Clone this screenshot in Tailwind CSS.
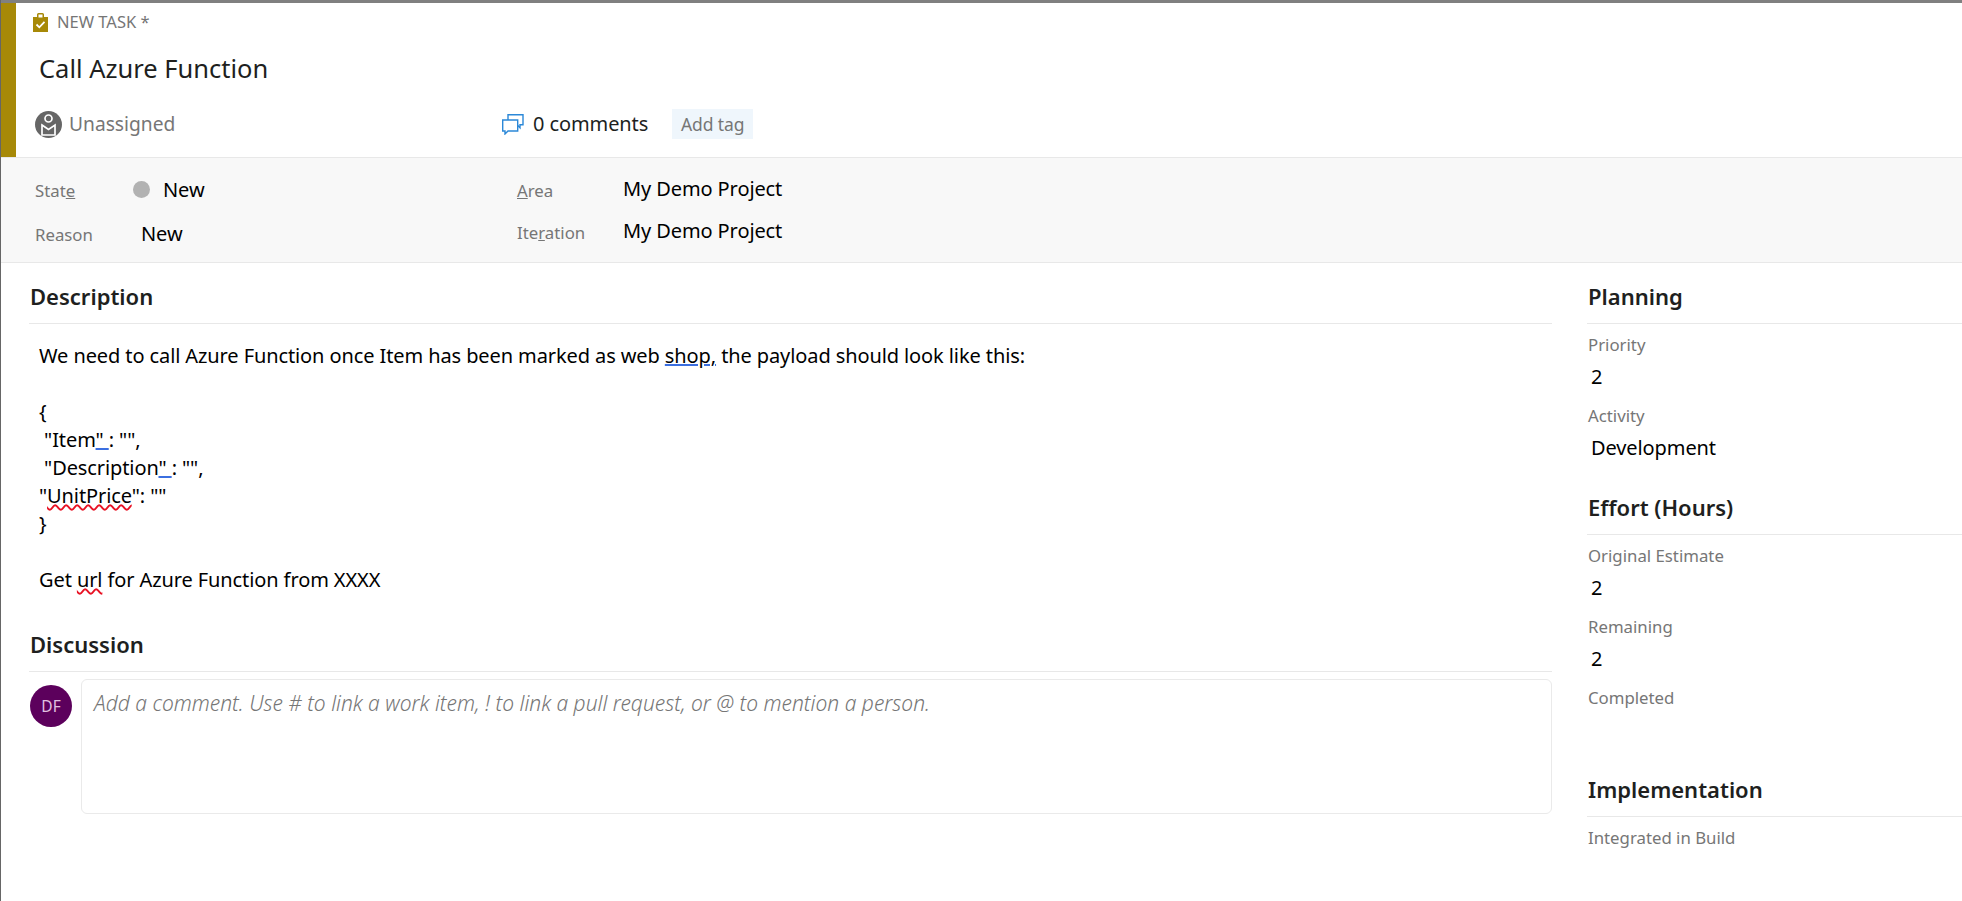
<!DOCTYPE html>
<html lang="en">
<head>
<meta charset="utf-8">
<title>New Task</title>
<script src="https://cdn.jsdelivr.net/npm/@tailwindcss/browser@4"></script>
</head>
<body class="bg-white font-['Noto_Sans',sans-serif] text-[20px] leading-[28px] text-black tracking-[-0.1px] overflow-hidden">
<div class="w-[1962px] h-[901px] border-l border-l-[#666] overflow-hidden">
  <div class="h-[3px] bg-[#808080]"></div>
  <header class="flex h-[155px] border-b border-b-[#e8e8e8]">
    <div class="w-[15px] bg-[#a78908] shrink-0"></div>
    <div class="flex flex-col pl-[17px]">
      <div class="flex items-center h-[38px] gap-[9px] text-[16.5px] text-[#767676] tracking-normal">
        <svg class="w-[15px] h-[19px] mt-[1px]" viewBox="0 0 15 19"><path fill="#a78908" d="M0 4h4V1.500A1.500 1.500 0 0 1 5.500 0h4A1.500 1.500 0 0 1 11 1.500V4h4v15H0z"/><path fill="none" stroke="#fff" stroke-width="1.800" d="M3.500 11.500l2.800 2.800 5.200-5.500"/><rect x="5.500" y="1.500" width="4" height="3" fill="#fff"/></svg>
        <span>NEW TASK *</span>
      </div>
      <div class="h-[50px] mt-[2px] flex items-center pl-[6px] text-[25.5px] text-[#201f1e] tracking-normal">Call Azure Function</div>
      <div class="flex items-center h-[54px] mt-[4px]">
        <div class="flex items-center w-[469px] pl-[2px] gap-[7px] text-[19.2px] text-[#767676] tracking-normal">
          <svg class="w-[27px] h-[27px]" viewBox="0 0 27 27"><circle cx="13.500" cy="13.500" r="13.500" fill="#666"/><circle cx="13.500" cy="7.500" r="3.500" fill="none" stroke="#fff" stroke-width="1.700"/><path fill="none" stroke="#fff" stroke-width="1.700" d="M7 14l6.500 4.500L20 14v10H7z"/></svg>
          <span>Unassigned</span>
        </div>
        <svg class="w-[22px] h-[21px]" viewBox="0 0 22 21" fill="none" stroke="#2b88d8" stroke-width="1.400"><path d="M6 6V.7h15v10h-3v3l-3-3"/><path fill="#fff" d="M.7 6h15v11H6l-3 3v-3H.7z"/></svg>
        <span class="ml-[9px] text-[#201f1e]">0 comments</span>
        <span class="ml-[24px] h-[30px] w-[81px] flex items-center justify-center bg-[#eff6fc] text-[17.5px] text-[#767676]">Add tag</span>
      </div>
    </div>
  </header>
  <section class="flex h-[105px] bg-[#f8f8f8] border-b border-b-[#e8e8e8] pl-[34px]">
    <div class="w-[482px] flex flex-col pt-[17px]">
      <div class="flex items-center h-[32px]">
        <span class="w-[98px] text-[16.8px] text-[#767676] tracking-normal">Stat<span class="underline">e</span></span>
        <span class="w-[17px] h-[17px] rounded-full bg-[#b2b2b2] mb-[4px]"></span>
        <span class="ml-[13px] mb-[3px]">New</span>
      </div>
      <div class="flex items-center h-[32px] mt-[12px]">
        <span class="w-[106px] text-[16.8px] text-[#767676] tracking-normal">Reason</span>
        <span class="mb-[2px]">New</span>
      </div>
    </div>
    <div class="flex flex-col pt-[17px]">
      <div class="flex items-center h-[32px]">
        <span class="w-[106px] text-[16.8px] text-[#767676] tracking-normal"><span class="underline">A</span>rea</span>
        <span class="mb-[4px]">My Demo Project</span>
      </div>
      <div class="flex items-center h-[32px] mt-[10px]">
        <span class="w-[106px] text-[16.8px] text-[#767676] tracking-normal">Ite<span class="underline">r</span>ation</span>
        <span class="mb-[4px]">My Demo Project</span>
      </div>
    </div>
  </section>
  <main class="flex pl-[28px]">
    <div class="w-[1523px] shrink-0">
      <h2 class="h-[61px] pt-[19px] pl-[1px] border-b border-b-[#e8e8e8] text-[22px] font-semibold text-[#201f1e] tracking-normal">Description</h2>
      <div class="pl-[10px] pt-[18px]">
        <p>We need to call Azure Function once Item has been marked as web <span class="underline decoration-[#3b6fe0]">shop,</span> the payload should look like this:</p>
        <p class="h-[28px]"></p>
        <p>{</p>
        <p>&nbsp;"Item<span class="underline decoration-[#3b6fe0]">" </span>: "",</p>
        <p>&nbsp;"Description<span class="underline decoration-[#3b6fe0]">" </span>: "",</p>
        <p>"<span class="underline decoration-wavy decoration-[#e81123]">UnitPrice</span>": ""</p>
        <p>}</p>
        <p class="h-[28px]"></p>
        <p>Get <span class="underline decoration-wavy decoration-[#e81123]">url</span> for Azure Function from XXXX</p>
      </div>
      <h2 class="h-[60px] mt-[18px] pt-[18px] pl-[1px] border-b border-b-[#e8e8e8] text-[22px] font-semibold text-[#201f1e] tracking-normal">Discussion</h2>
      <div class="flex mt-[7px]">
        <div class="w-[42px] h-[42px] mt-[6px] ml-[1px] rounded-full bg-[#5c005c] flex items-center justify-center text-[15.5px] text-[#e0c0e0] tracking-normal shrink-0">DF</div>
        <div class="ml-[9px] flex-1 h-[135px] border border-[#eaeaea] rounded-md pl-[12px] pt-[9px] italic font-light text-[21px] text-[#767676] tracking-normal">Add a comment. Use # to link a work item, ! to link a pull request, or @ to mention a person.</div>
      </div>
    </div>
    <aside class="flex-1 ml-[35px]">
      <h2 class="h-[61px] pt-[19px] pl-[1px] border-b border-b-[#e8e8e8] text-[22px] font-semibold text-[#201f1e] tracking-normal">Planning</h2>
      <p class="mt-[7px] pl-[1px] text-[16.8px] text-[#767676] tracking-normal">Priority</p>
      <p class="mt-[4px] pl-[4px]">2</p>
      <p class="mt-[11px] pl-[1px] text-[16.8px] text-[#767676] tracking-normal">Activity</p>
      <p class="mt-[4px] pl-[4px]">Development</p>
      <h2 class="h-[60px] mt-[13px] pt-[18px] pl-[1px] border-b border-b-[#e8e8e8] text-[22px] font-semibold text-[#201f1e] tracking-normal">Effort (Hours)</h2>
      <p class="mt-[7px] pl-[1px] text-[16.8px] text-[#767676] tracking-normal">Original Estimate</p>
      <p class="mt-[4px] pl-[4px]">2</p>
      <p class="mt-[11px] pl-[1px] text-[16.8px] text-[#767676] tracking-normal">Remaining</p>
      <p class="mt-[4px] pl-[4px]">2</p>
      <p class="mt-[11px] pl-[1px] text-[16.8px] text-[#767676] tracking-normal">Completed</p>
      <h2 class="h-[60px] mt-[45px] pt-[18px] pl-[1px] border-b border-b-[#e8e8e8] text-[22px] font-semibold text-[#201f1e] tracking-normal">Implementation</h2>
      <p class="mt-[7px] pl-[1px] text-[16.8px] text-[#767676] tracking-normal">Integrated in Build</p>
    </aside>
  </main>
</div>
</body>
</html>
